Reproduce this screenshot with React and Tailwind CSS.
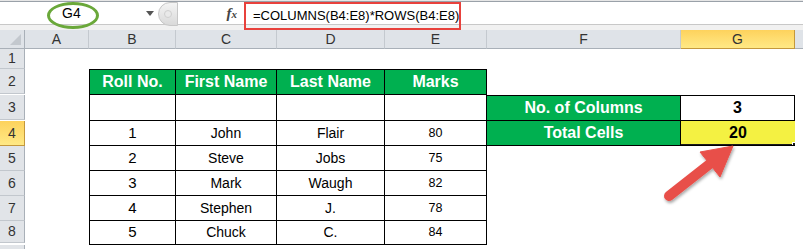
import React from 'react';

const COLS = ['A', 'B', 'C', 'D', 'E', 'F', 'G'];
const font = { fontFamily: '"Liberation Sans", Arial, sans-serif' };

const cell = 'flex items-center justify-center overflow-hidden whitespace-nowrap';
const tb = 'border-r border-b border-black';
const green = 'bg-[#00b050] text-white font-bold text-[16px]';
const txt = 'text-[14px] text-black';
const small = 'text-[12.5px] text-black';

const people = [
  ['1', 'John', 'Flair', '80'],
  ['2', 'Steve', 'Jobs', '75'],
  ['3', 'Mark', 'Waugh', '82'],
  ['4', 'Stephen', 'J.', '78'],
  ['5', 'Chuck', 'C.', '84'],
];

const RowHead = ({ n, h, active }) => (
  <div
    className={`${cell} ${h} text-[14px] text-[#333] border-r border-b ${
      active
        ? 'bg-gradient-to-b from-[#fdd25c] to-[#ffe985] border-[#c4983c]'
        : 'bg-[#e1e4e8] border-r-[#a9b0b8] border-b-[#c2c7cd]'
    }`}
  >
    {n}
  </div>
);

const FormulaBar = () => (
  <div className="relative h-[30px] bg-[#f1f1f1] border-t border-[#e6e6e6]">
    <div className="flex h-[24px] bg-white border-t border-[#9aa1a9] border-b border-b-[#c8c8c8]">
      <div className="relative w-[158px] flex items-center">
        <span className="ml-[62px] text-[14px] text-black">G4</span>
        <span className="absolute left-[146px] top-[9px] w-0 h-0 border-l-[4px] border-r-[4px] border-t-[5px] border-l-transparent border-r-transparent border-t-[#555]" />
      </div>
      <div className="w-[20px] h-[24px] rounded-l-full bg-gradient-to-b from-[#f4f4f4] to-[#d9d9d9] border border-[#c7c7c7] flex items-center justify-center">
        <div className="w-[8px] h-[8px] rounded-full bg-[#e9e9e9] border border-[#cfcfcf]" />
      </div>
      <div className="w-[64px] flex items-center justify-end pr-[5px]">
        <span className="text-[15px] italic font-bold text-[#444]" style={{ fontFamily: '"Liberation Serif", serif' }}>
          f<span className="text-[11px]">x</span>
        </span>
      </div>
      <div className="flex-1" />
    </div>
    <div className="absolute left-[244px] top-[1px] w-[217px] h-[28px] border-2 border-[#e8413c] flex items-center pl-[7px] text-[13px] text-black">
      =COLUMNS(B4:E8)*ROWS(B4:E8)
    </div>
    <div className="absolute left-[47px] top-[1px] w-[52px] h-[27px] rounded-[50%] border-[3px] border-[#6aa83a]" />
  </div>
);

export default function App() {
  return (
    <div className="relative w-[803px] h-[249px] overflow-hidden bg-white" style={font}>
      <FormulaBar />
      <div className="grid grid-cols-[25px_64px_87px_101px_108px_102px_194px_114px_1fr]">
        {/* column header row */}
        <div className="relative h-[19px] bg-[#dfe3e8] border-r border-b border-[#a9b0b8]">
          <span className="absolute right-[3px] bottom-[3px] w-0 h-0" style={{ borderBottom: '11px solid #c3c8ce', borderLeft: '11px solid transparent' }} />
        </div>
        {COLS.map((c) => (
          <div
            key={c}
            className={`${cell} h-[19px] text-[14px] text-[#333] border-r border-b ${
              c === 'G'
                ? 'bg-gradient-to-b from-[#fdd25c] to-[#ffe985] border-[#c4983c]'
                : 'bg-[#dfe3e8] border-r-[#c4c9cf] border-b-[#a9b0b8]'
            }`}
          >
            {c}
          </div>
        ))}
        <div className="h-[19px] bg-[#dfe3e8] border-b border-[#a9b0b8]" />

        {/* row 1 */}
        <RowHead n="1" h="h-[20px]" />
        {Array.from({ length: 8 }).map((_, i) => (
          <div key={i} className="h-[20px]" />
        ))}

        {/* row 2 */}
        <RowHead n="2" h="h-[25px]" />
        <div />
        <div className={`${cell} ${green} ${tb} border-l border-t`}>Roll No.</div>
        <div className={`${cell} ${green} ${tb} border-t`}>First Name</div>
        <div className={`${cell} ${green} ${tb} border-t`}>Last Name</div>
        <div className={`${cell} ${green} ${tb} border-t`}>Marks</div>
        <div />
        <div />
        <div />

        {/* row 3 */}
        <RowHead n="3" h="h-[25px]" />
        <div />
        <div className={`${tb} border-l`} />
        <div className={tb} />
        <div className={tb} />
        <div className={tb} />
        <div className={`${cell} ${green} ${tb} border-t`}>No. of Columns</div>
        <div className={`${cell} ${tb} border-t text-[16px] font-bold text-black`}>3</div>
        <div />

        {people.map((p, idx) => {
          const r = idx + 4;
          const h = r === 8 ? 'h-[22px]' : 'h-[25px]';
          return (
            <React.Fragment key={r}>
              <RowHead n={String(r)} h={h} active={r === 4} />
              <div />
              <div className={`${cell} ${txt} ${tb} border-l text-[15px]`}>{p[0]}</div>
              <div className={`${cell} ${txt} ${tb}`}>{p[1]}</div>
              <div className={`${cell} ${txt} ${tb}`}>{p[2]}</div>
              <div className={`${cell} ${small} ${tb}`}>{p[3]}</div>
              {r === 4 ? (
                <>
                  <div className={`${cell} ${green} ${tb}`}>Total Cells</div>
                  <div className={`${cell} relative bg-[#f4f142] border-b border-black text-[16px] font-bold text-black`}>
                    20
                    <div className="absolute inset-x-[-2px] top-[-2px] bottom-[-1px] border-2 border-[#1a1a1a]" />
                    <div className="absolute right-[-4px] bottom-[-4px] w-[7px] h-[7px] bg-[#1a1a1a] border border-white" />
                  </div>
                </>
              ) : (
                <>
                  <div />
                  <div />
                </>
              )}
              <div />
            </React.Fragment>
          );
        })}

        {/* row 9 (cut off) */}
        <RowHead n="9" h="h-[20px]" />
      </div>

      {/* red arrow */}
      <svg className="absolute left-0 top-0 pointer-events-none" width="803" height="249" viewBox="0 0 803 249">
        <defs>
          <filter id="sh" x="-20%" y="-20%" width="140%" height="140%">
            <feDropShadow dx="1" dy="2" stdDeviation="1.5" floodColor="#000" floodOpacity="0.35" />
          </filter>
        </defs>
        <g filter="url(#sh)" fill="#e8504a" stroke="#e8504a">
          <line x1="669" y1="196" x2="711" y2="163" strokeWidth="10" strokeLinecap="round" />
          <polygon points="733,146 720,177 700,152" strokeWidth="1" strokeLinejoin="round" />
        </g>
      </svg>
    </div>
  );
}
